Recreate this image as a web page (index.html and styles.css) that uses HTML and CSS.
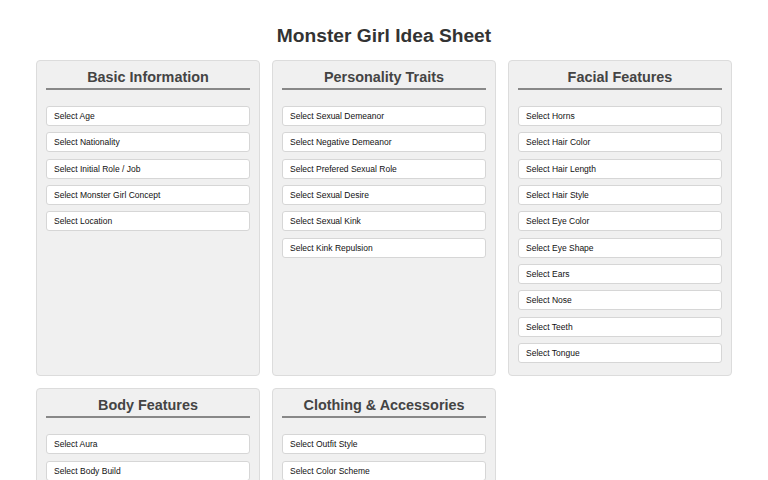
FILE: index.html
```html
<!DOCTYPE html>
<html lang="en">
<head>
<meta charset="utf-8">
<title>Monster Girl Idea Sheet</title>
<link rel="stylesheet" href="styles.css">
</head>
<body>
<h1 class="title">Monster Girl Idea Sheet</h1>
<main class="sheet">
  <section class="card">
    <h2 class="card-title">Basic Information</h2>
    <select class="pick"><option>Select Age</option></select>
    <select class="pick"><option>Select Nationality</option></select>
    <select class="pick"><option>Select Initial Role / Job</option></select>
    <select class="pick"><option>Select Monster Girl Concept</option></select>
    <select class="pick"><option>Select Location</option></select>
  </section>
  <section class="card">
    <h2 class="card-title">Personality Traits</h2>
    <select class="pick"><option>Select Sexual Demeanor</option></select>
    <select class="pick"><option>Select Negative Demeanor</option></select>
    <select class="pick"><option>Select Prefered Sexual Role</option></select>
    <select class="pick"><option>Select Sexual Desire</option></select>
    <select class="pick"><option>Select Sexual Kink</option></select>
    <select class="pick"><option>Select Kink Repulsion</option></select>
  </section>
  <section class="card">
    <h2 class="card-title">Facial Features</h2>
    <select class="pick"><option>Select Horns</option></select>
    <select class="pick"><option>Select Hair Color</option></select>
    <select class="pick"><option>Select Hair Length</option></select>
    <select class="pick"><option>Select Hair Style</option></select>
    <select class="pick"><option>Select Eye Color</option></select>
    <select class="pick"><option>Select Eye Shape</option></select>
    <select class="pick"><option>Select Ears</option></select>
    <select class="pick"><option>Select Nose</option></select>
    <select class="pick"><option>Select Teeth</option></select>
    <select class="pick"><option>Select Tongue</option></select>
  </section>
  <section class="card">
    <h2 class="card-title">Body Features</h2>
    <select class="pick"><option>Select Aura</option></select>
    <select class="pick"><option>Select Body Build</option></select>
    <select class="pick"><option>Select Height</option></select>
    <select class="pick"><option>Select Skin Color</option></select>
    <select class="pick"><option>Select Breast Size</option></select>
  </section>
  <section class="card">
    <h2 class="card-title">Clothing &amp; Accessories</h2>
    <select class="pick"><option>Select Outfit Style</option></select>
    <select class="pick"><option>Select Color Scheme</option></select>
    <select class="pick"><option>Select Accessories</option></select>
  </section>
</main>
</body>
</html>
```
FILE: styles.css
```css
html, body {
  margin: 0;
  padding: 0;
  background: #ffffff;
}
body {
  font-family: "Liberation Sans", Arial, sans-serif;
  color: #333333;
}
.title {
  margin: 0;
  padding-top: 25px;
  font-size: 19.2px;
  line-height: 22px;
  font-weight: bold;
  text-align: center;
  color: #333333;
}
.sheet {
  width: 696px;
  margin: 13px auto 0;
  display: grid;
  grid-template-columns: repeat(3, 224px);
  gap: 12px;
}
.card {
  box-sizing: border-box;
  background: #f0f0f0;
  border: 1px solid #dcdcdc;
  border-radius: 4px;
  padding: 8px 9px 6px;
  display: flex;
  flex-direction: column;
}
.card-title {
  margin: 0 0 16px;
  padding-bottom: 2px;
  font-size: 14.4px;
  line-height: 17px;
  font-weight: bold;
  text-align: center;
  color: #444444;
  border-bottom: 2px solid #888888;
}
.pick {
  -webkit-appearance: none;
  appearance: none;
  box-sizing: border-box;
  width: 100%;
  height: 20px;
  margin: 0 0 6.33px;
  padding: 0 7px;
  font-family: "Liberation Sans", Arial, sans-serif;
  font-size: 8.5px;
  color: #111111;
  background: #ffffff;
  border: 1px solid #d6d6d6;
  border-radius: 3px;
  outline: none;
}
```
